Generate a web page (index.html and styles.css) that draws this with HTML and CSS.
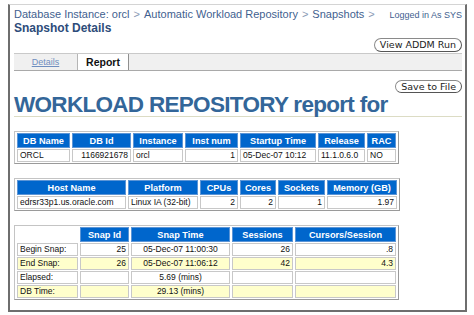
FILE: index.html
```html
<!DOCTYPE html>
<html lang="en">
<head>
    <meta charset="UTF-8">
    <title>Snapshot Details</title>
    <link rel="stylesheet" href="styles.css">
</head>
<body>
    <div class="frame">
        <div class="crumbs">
            <div class="trail">
                <a href="#">Database Instance: orcl</a>
                <span class="sep">&gt;</span>
                <a href="#">Automatic Workload Repository</a>
                <span class="sep">&gt;</span>
                <a href="#">Snapshots</a>
                <span class="sep">&gt;</span>
            </div>
            <div class="login">Logged in As SYS</div>
        </div>
        <h2 class="page-title">Snapshot Details</h2>

        <div class="actions">
            <button class="btn">View ADDM Run</button>
        </div>

        <div class="tabs">
            <a href="#" class="tab">Details</a>
            <span class="tab active">Report</span>
            <span class="tab-rest"></span>
        </div>

        <div class="actions save">
            <button class="btn">Save to File</button>
        </div>

        <h1 class="awr">WORKLOAD REPOSITORY report for</h1>

        <!-- database info -->
        <table class="tdiff t-db">
            <tr>
                <th class="c-dbname">DB Name</th>
                <th class="c-dbid">DB Id</th>
                <th class="c-inst">Instance</th>
                <th class="c-instnum">Inst num</th>
                <th class="c-startup">Startup Time</th>
                <th class="c-release">Release</th>
                <th class="c-rac">RAC</th>
            </tr>
            <tr>
                <td>ORCL</td>
                <td class="num">1166921678</td>
                <td>orcl</td>
                <td class="num">1</td>
                <td>05-Dec-07 10:12</td>
                <td>11.1.0.6.0</td>
                <td>NO</td>
            </tr>
        </table>

        <!-- host info -->
        <table class="tdiff t-host">
            <tr>
                <th class="c-host">Host Name</th>
                <th class="c-platform">Platform</th>
                <th class="c-cpus">CPUs</th>
                <th class="c-cores">Cores</th>
                <th class="c-sockets">Sockets</th>
                <th class="c-mem">Memory (GB)</th>
            </tr>
            <tr>
                <td>edrsr33p1.us.oracle.com</td>
                <td>Linux IA (32-bit)</td>
                <td class="num">2</td>
                <td class="num">2</td>
                <td class="num">1</td>
                <td class="num">1.97</td>
            </tr>
        </table>

        <!-- snapshot info -->
        <table class="tdiff t-snap">
            <tr>
                <th class="c-label blank"></th>
                <th class="c-snapid">Snap Id</th>
                <th class="c-snaptime">Snap Time</th>
                <th class="c-sessions">Sessions</th>
                <th class="c-cursors">Cursors/Session</th>
            </tr>
            <tr>
                <td>Begin Snap:</td>
                <td class="num">25</td>
                <td class="mid">05-Dec-07 11:00:30</td>
                <td class="num">26</td>
                <td class="num">.8</td>
            </tr>
            <tr class="alt">
                <td>End Snap:</td>
                <td class="num">26</td>
                <td class="mid">05-Dec-07 11:06:12</td>
                <td class="num">42</td>
                <td class="num">4.3</td>
            </tr>
            <tr>
                <td>Elapsed:</td>
                <td></td>
                <td class="mid">5.69 (mins)</td>
                <td></td>
                <td></td>
            </tr>
            <tr class="alt">
                <td>DB Time:</td>
                <td></td>
                <td class="mid">29.13 (mins)</td>
                <td></td>
                <td></td>
            </tr>
        </table>
    </div>
</body>
</html>
```

FILE: styles.css
```css
body {
    margin: 0;
    padding: 4px 0 0 8px;
    background: #ffffff;
    font-family: "Liberation Sans", Arial, sans-serif;
}

.frame {
    box-sizing: border-box;
    width: 459px;
    height: 308px;
    border: 2px solid #6e6e6e;
    border-top: 1px solid #d4d4d4;
    padding: 3px 3px 0 4px;
    overflow: hidden;
}

/* header: breadcrumbs + user */
.crumbs {
    display: flex;
    align-items: baseline;
    justify-content: space-between;
    height: 13px;
    line-height: 13px;
}

.trail {
    display: flex;
    align-items: baseline;
    font-size: 11px;
}

.trail a {
    color: #3f5f8f;
    text-decoration: none;
}

.sep {
    color: #8a9ab5;
    margin: 0 4px;
}

.login {
    font-size: 9px;
    color: #3f5f8f;
}

.page-title {
    margin: 0;
    height: 15px;
    line-height: 15px;
    font-size: 12px;
    font-weight: 600;
    color: #2d4c7a;
}

.actions {
    display: flex;
    justify-content: flex-end;
    margin-top: 2px;
}

.actions.save {
    margin-top: 9px;
}

.btn {
    height: 14px;
    padding: 0 5px;
    border: 1px solid #8a8a8a;
    border-right-color: #555;
    border-bottom-color: #555;
    border-radius: 7px;
    background: #ffffff;
    font-family: "DejaVu Sans", sans-serif;
    font-size: 9.5px;
    line-height: 12px;
    color: #222;
}

.save .btn {
    height: 13px;
    line-height: 11px;
}

/* tab strip */
.tabs {
    display: flex;
    height: 18px;
    margin-top: 1px;
    background: #f0f0f0;
    border-top: 1px solid #c9c9c9;
    border-bottom: 1px solid #a9a9a9;
    box-sizing: border-box;
}

.tab {
    display: flex;
    align-items: center;
    justify-content: center;
    font-size: 9px;
}

a.tab {
    width: 63px;
    color: #6f8ebf;
    text-decoration: underline;
}

.tab.active {
    width: 50px;
    background: #ffffff;
    border-left: 1px solid #b5b5b5;
    border-right: 1px solid #8f8f8f;
    font-size: 10.5px;
    font-weight: bold;
    color: #111;
}

.tab-rest {
    flex: 1;
}

/* report heading */
h1.awr {
    margin: 1px 0 0;
    height: 22px;
    line-height: 22px;
    font-family: "Liberation Sans", Arial, sans-serif;
    font-size: 22.5px;
    letter-spacing: -0.7px;
    font-weight: bold;
    color: #336699;
    border-bottom: 1px solid #dcdcc4;
    white-space: nowrap;
}

/* AWR tables */
.tdiff {
    table-layout: fixed;
    border-collapse: separate;
    border-spacing: 2px 1px;
    border: 1px solid #c4c4c4;
    border-right-color: #9a9a9a;
    border-bottom-color: #9a9a9a;
    margin-top: 14px;
    font-size: 8.5px;
}

.t-db { width: 385px; }
.t-host { width: 386px; }
.t-snap { width: 385px; }

.tdiff th,
.tdiff td {
    box-sizing: border-box;
    padding: 0 2px;
    white-space: nowrap;
    overflow: hidden;
}

.tdiff th {
    height: 15px;
    background: #0066cc;
    border: 1px solid #5c95d6;
    color: #ffffff;
    font-size: 9.2px;
    font-weight: bold;
    text-align: center;
}

.tdiff th.blank {
    background: #ffffff;
    border-color: #ffffff;
}

.tdiff td {
    height: 13px;
    line-height: 11px;
    background: #ffffff;
    border: 1px solid #c8c8c8;
    color: #111;
    text-align: left;
}

.tdiff tr.alt td {
    background: #ffffcc;
}

.tdiff td.num {
    text-align: right;
}

.tdiff td.mid {
    text-align: center;
}

/* column widths */
.c-dbname { width: 53px; }
.c-dbid { width: 59px; }
.c-inst { width: 50px; }
.c-instnum { width: 53px; }
.c-startup { width: 76px; }
.c-release { width: 47px; }
.c-rac { width: 29px; }

.c-host { width: 109px; }
.c-platform { width: 70px; }
.c-cpus { width: 38px; }
.c-cores { width: 36px; }
.c-sockets { width: 47px; }
.c-mem { width: 70px; }

.c-label { width: 61px; }
.c-snapid { width: 49px; }
.c-snaptime { width: 99px; }
.c-sessions { width: 61px; }
.c-cursors { width: 101px; }
```
